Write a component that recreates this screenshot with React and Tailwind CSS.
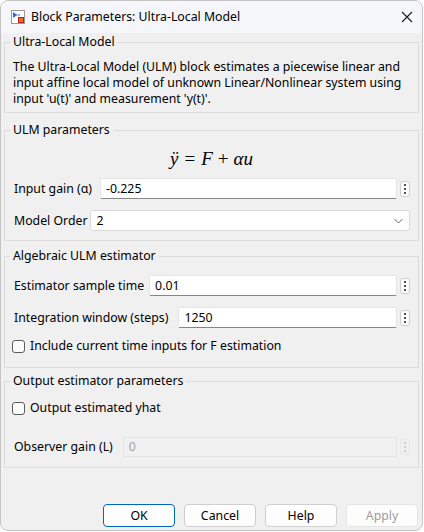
import React from "react";

const font = { fontFamily: "'Segoe UI', 'Noto Sans', Roboto, sans-serif" };

const BlockIcon = () => (
  <svg width="14" height="14" viewBox="0 0 14 14">
    <rect x="0.5" y="0.5" width="13" height="13" fill="#ffffff" stroke="#9a9a9a" />
    <path d="M2 2 L2 8 L6.5 5 Z" fill="#2f6fd6" />
    <path d="M6.5 5 L9 5" stroke="#2f6fd6" strokeWidth="1" />
    <rect x="7.5" y="7.5" width="5" height="5" fill="#f26b1d" stroke="#b3261e" />
  </svg>
);

const CloseIcon = () => (
  <svg width="12" height="12" viewBox="0 0 12 12">
    <path d="M1 1 L11 11 M11 1 L1 11" stroke="#1a1a1a" strokeWidth="1.1" />
  </svg>
);

const DotsButton = ({ disabled }) => (
  <button
    className={
      disabled
        ? "w-[10px] h-[16px] ml-[3px] rounded-[3px] border border-[#e8e8e8] flex flex-col items-center justify-center gap-[2px]"
        : "w-[10px] h-[16px] ml-[3px] rounded-[3px] border border-[#cfcfcf] bg-[#fbfbfb] flex flex-col items-center justify-center gap-[2px]"
    }
  >
    {[0, 1, 2].map((i) => (
      <span
        key={i}
        className={
          disabled
            ? "block w-[2px] h-[2px] rounded-full bg-[#c4c4c4]"
            : "block w-[2px] h-[2px] rounded-full bg-[#1a1a1a]"
        }
      />
    ))}
  </button>
);

const Field = ({ label, value, disabled, gap }) => (
  <div className="flex items-center">
    <span className={"ml-[1px] whitespace-nowrap " + (gap || "mr-[9px]")}>{label}</span>
    {disabled ? (
      <div className="flex-1 h-[20px] border border-[#e3e3e3] bg-[#f0f0f0] px-[5px] flex items-center text-[#a3a3a3]">
        {value}
      </div>
    ) : (
      <div className="flex-1 h-[21px] bg-white border border-[#e5e5e5] border-b-[#868686] rounded-[2px] px-[5px] flex items-center">
        {value}
      </div>
    )}
    <DotsButton disabled={disabled} />
  </div>
);

const Checkbox = ({ label }) => (
  <div className="flex items-center">
    <span className="w-[13px] h-[13px] rounded-[3px] border border-[#5c5c5c] bg-[#fbfbfb] mr-[5px] ml-[-1px]" />
    <span>{label}</span>
  </div>
);

const Group = ({ title, children, className }) => (
  <fieldset className={"mx-[3px] border border-[#dcdcdc] px-[5px] " + (className || "")}>
    <legend className="px-[3px] leading-[16px]">{title}</legend>
    <div className="px-[3px]">{children}</div>
  </fieldset>
);

const Button = ({ children, primary, disabled }) => {
  let cls =
    "w-[72px] h-[23px] rounded-[4px] border bg-[#fdfdfd] flex items-center justify-center ";
  if (primary) cls += "border-[#0067c0]";
  else if (disabled) cls += "border-[#e6e6e6] bg-[#f5f5f5] text-[#9d9d9d]";
  else cls += "border-[#d0d0d0]";
  return <button className={cls}>{children}</button>;
};

export default function App() {
  return (
    <div
      className="w-[423px] h-[531px] rounded-[8px] border border-[#c4c4c4] bg-[#f0f0f0] overflow-hidden flex flex-col text-[12.3px] leading-[16px] text-black"
      style={font}
    >
      <div className="h-[32px] shrink-0 bg-[#f4f6fa] flex items-center pl-[10px] pr-[9px]">
        <BlockIcon />
        <span className="ml-[6px] flex-1">Block Parameters: Ultra-Local Model</span>
        <CloseIcon />
      </div>

      <div className="pt-[1px]">
        <Group title="Ultra-Local Model">
          <p className="pt-[9px] pb-[5px]">
            The Ultra-Local Model (ULM) block estimates a piecewise linear and input affine local
            model of unknown Linear/Nonlinear system using input 'u(t)' and measurement 'y(t)'.
          </p>
        </Group>

        <Group title="ULM parameters" className="mt-[9px]">
          <div className="pt-[11px] pb-[9px]">
            <div
              className="h-[20px] flex items-center justify-center text-[19px]"
              style={{ fontFamily: "'Liberation Serif', 'DejaVu Serif', serif" }}
            >
              <span className="italic">ÿ</span>
              <span className="mx-[6px]">=</span>
              <span className="italic">F</span>
              <span className="mx-[5px]">+</span>
              <span className="italic">αu</span>
            </div>
            <div className="mt-[9px]">
              <Field label="Input gain (α)" value="-0.225" gap="mr-[8px]" />
            </div>
            <div className="mt-[11px] flex items-center">
              <span className="ml-[1px] mr-[3px]">Model Order</span>
              <div className="flex-1 h-[21px] bg-white border border-[#d9d9d9] rounded-[3px] pl-[5px] pr-[6px] flex items-center justify-between">
                <span>2</span>
                <svg width="9" height="6" viewBox="0 0 9 6">
                  <path d="M0.5 1 L4.5 5 L8.5 1" fill="none" stroke="#5a5a5a" strokeWidth="0.9" />
                </svg>
              </div>
            </div>
          </div>
        </Group>

        <Group title="Algebraic ULM estimator" className="mt-[7px]">
          <div className="pt-[11px] pb-[13px]">
            <Field label="Estimator sample time" value="0.01" gap="mr-[5px]" />
            <div className="mt-[11px]">
              <Field label="Integration window (steps)" value="1250" gap="mr-[10px]" />
            </div>
            <div className="mt-[10px]">
              <Checkbox label="Include current time inputs for F estimation" />
            </div>
          </div>
        </Group>

        <Group title="Output estimator parameters" className="mt-[5px]">
          <div className="pt-[11px] pb-[10px]">
            <Checkbox label="Output estimated yhat" />
            <div className="mt-[21px]">
              <Field label="Observer gain (L)" value="0" disabled gap="mr-[10px]" />
            </div>
          </div>
        </Group>
      </div>

      <div className="mt-auto mb-[3px] flex justify-end gap-[9px] pr-[4px]">
        <Button primary>OK</Button>
        <Button>Cancel</Button>
        <Button>Help</Button>
        <Button disabled>Apply</Button>
      </div>
    </div>
  );
}
